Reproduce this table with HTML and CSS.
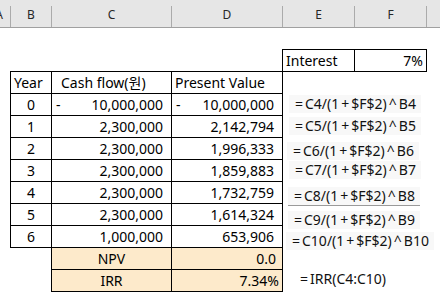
FILE: index.html
```html
<!DOCTYPE html>
<html lang="ko">
<head>
<meta charset="utf-8">
<title>NPV IRR</title>
<link rel="stylesheet" href="styles.css">
</head>
<body>
<div class="colheads">
  <div class="ch ch-a">A</div>
  <div class="ch ch-b">B</div>
  <div class="ch ch-c">C</div>
  <div class="ch ch-d">D</div>
  <div class="ch ch-e">E</div>
  <div class="ch ch-f">F</div>
  <div class="ch ch-g"></div>
</div>
<div class="sheet">
  <div class="row-gap"></div>

  <div class="cell c-e be">Interest</div>
  <div class="cell c-f re be num pr3">7%</div>

  <div class="cell c-b">Year</div>
  <div class="cell c-c hdr-c">Cash flow(원)</div>
  <div class="cell c-d re">Present Value</div>

  <div class="cell c-b ctr">0</div>
  <div class="cell c-c acc"><span>-</span><span>10,000,000</span></div>
  <div class="cell c-d re acc"><span>-</span><span>10,000,000</span></div>

  <div class="cell c-b ctr">1</div>
  <div class="cell c-c num">2,300,000</div>
  <div class="cell c-d re num">2,142,794</div>

  <div class="cell c-b ctr">2</div>
  <div class="cell c-c num">2,300,000</div>
  <div class="cell c-d re num">1,996,333</div>

  <div class="cell c-b ctr">3</div>
  <div class="cell c-c num">2,300,000</div>
  <div class="cell c-d re num">1,859,883</div>

  <div class="cell c-b ctr">4</div>
  <div class="cell c-c num">2,300,000</div>
  <div class="cell c-d re num">1,732,759</div>

  <div class="cell c-b ctr">5</div>
  <div class="cell c-c num">2,300,000</div>
  <div class="cell c-d re num">1,614,324</div>

  <div class="cell c-b ctr be">6</div>
  <div class="cell c-c num">1,000,000</div>
  <div class="cell c-d re num">653,906</div>

  <div class="cell c-c ctr fill">NPV</div>
  <div class="cell c-d re num fill pr6">0.0</div>

  <div class="cell c-c ctr fill be">IRR</div>
  <div class="cell c-d re num fill be pr3">7.34%</div>
</div>

<div class="formulas">
  <div class="fx f1"><span class="op-eq">=</span>C4/(1<span class="op">+</span>$F$2)<span class="op">^</span>B4</div>
  <div class="fx f2"><span class="op-eq">=</span>C5/(1<span class="op">+</span>$F$2)<span class="op">^</span>B5</div>
  <div class="fx f3"><span class="op-eq">=</span>C6/(1<span class="op">+</span>$F$2)<span class="op">^</span>B6</div>
  <div class="fx f4"><span class="op-eq">=</span>C7/(1<span class="op">+</span>$F$2)<span class="op">^</span>B7</div>
  <div class="fx f5"><span class="op-eq">=</span>C8/(1<span class="op">+</span>$F$2)<span class="op">^</span>B8</div>
  <div class="fx f6"><span class="op-eq">=</span>C9/(1<span class="op">+</span>$F$2)<span class="op">^</span>B9</div>
  <div class="fx f7"><span class="op-eq">=</span>C10/(1<span class="op">+</span>$F$2)<span class="op">^</span>B10</div>
  <div class="fx f8"><span class="op-eq">=</span>IRR(C4:C10)</div>
</div>
</body>
</html>
```
FILE: styles.css
```css
* { box-sizing: border-box; }

html, body {
  margin: 0;
  padding: 0;
  background: #fff;
  width: 440px;
  height: 298px;
  overflow: hidden;
}

body {
  position: relative;
  font-family: "Noto Sans", "Noto Sans CJK KR", sans-serif;
  font-size: 14px;
  color: #000;
}

/* column header bar */
.colheads {
  display: flex;
  align-items: flex-end;
  height: 28px;
  background: #e6e6e6;
  border-bottom: 1px solid #a0a0a0;
  overflow: hidden;
}

.ch {
  flex: none;
  height: 21px;
  border-left: 1px solid #ababab;
  text-align: center;
  font-size: 12px;
  line-height: 18px;
  color: #262626;
}

.ch-a { width: 22px; margin-left: -12px; border-left: none; }
.ch-b { width: 41px; }
.ch-c { width: 120px; }
.ch-d { width: 111px; }
.ch-e { width: 72px; }
.ch-f { width: 72px; }
.ch-g { flex: 1; }

/* sheet grid */
.sheet {
  display: grid;
  grid-template-columns: 10px 41px 120px 111px 72px 72px 1fr;
  grid-template-rows: 21px repeat(11, 22px);
}

.row-gap { grid-column: 1 / -1; }

.cell {
  display: flex;
  align-items: center;
  border-left: 1px solid #000;
  border-top: 1px solid #000;
  padding: 0 3px;
  white-space: nowrap;
  line-height: 1;
}

.c-b { grid-column: 2; }
.c-c { grid-column: 3; }
.c-d { grid-column: 4; }
.c-e { grid-column: 5; }
.c-f { grid-column: 6; }

.re { border-right: 1px solid #000; margin-right: -1px; }
.be { border-bottom: 1px solid #000; margin-bottom: -1px; }

.ctr { justify-content: center; }
.num { justify-content: flex-end; padding-right: 8px; }
.pr3 { padding-right: 3px; }
.pr6 { padding-right: 6px; }
.acc { justify-content: space-between; padding: 0 8px 0 4px; }
.hdr-c { padding-left: 9px; }
.fill { background: #fdeacb; }

/* pasted formula notes */
.formulas {
  position: absolute;
  left: 289px;
  top: 95px;
  display: flex;
  flex-direction: column;
  align-items: flex-start;
}

.fx {
  height: 18px;
  line-height: 18px;
  padding: 0 5px 0 6px;
  background: #f8f8f8;
  white-space: nowrap;
  color: #111;
}

.op { margin: 0 2px; }
.op-eq { margin-right: 2px; }

.f1 { margin-top: 0; }
.f2 { margin-top: 4px; }
.f3 { margin-top: 7px; margin-left: -2px; }
.f4 { margin-top: 1px; }
.f5 {
  margin-top: 8px;
  margin-left: -1px;
  border-bottom: 1px solid #9a9a9a;
  height: 19px;
}
.f6 { margin-top: 5px; margin-left: -1px; }
.f7 { margin-top: 3px; margin-left: -3px; }
.f8 { margin-top: 20px; margin-left: 5px; background: transparent; }
```
